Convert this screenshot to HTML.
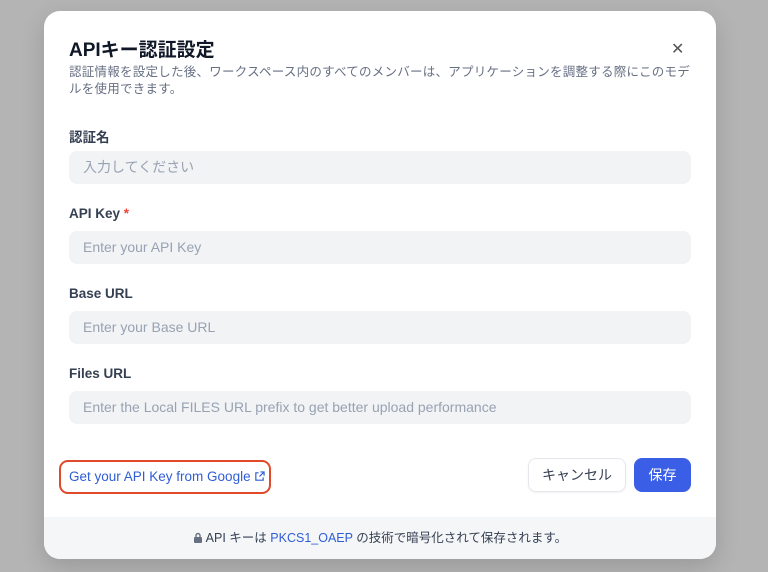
<!DOCTYPE html>
<html><head><meta charset="utf-8"><style>
*{box-sizing:border-box;margin:0;padding:0}
body{width:768px;height:572px;background:#b4b4b4;font-family:"Liberation Sans","Noto Sans CJK JP",sans-serif;position:relative;overflow:hidden}
.modal{position:absolute;left:44px;top:11px;width:672px;height:548px;background:#fff;border-radius:16px;overflow:hidden;box-shadow:0 8px 24px rgba(0,0,0,.15)}
.t{position:absolute;left:25px;top:24px;font-size:19px;font-weight:bold;color:#101828}
.x{position:absolute;left:627px;top:28px;font-size:16px;color:#555}
.d{position:absolute;left:25px;top:53px;width:625px;font-size:12.5px;line-height:17px;color:#676f83;letter-spacing:0.25px}
.l{position:absolute;left:25px;font-size:13.5px;font-weight:bold;color:#354052}
.l span{color:#f04438}
.i{position:absolute;left:25px;width:622px;height:33px;background:#f2f3f5;border-radius:8px;padding-left:14px;line-height:33px;font-size:14px;color:#98a2b3}
.link{position:absolute;left:15px;top:449px;width:212px;height:34px;border:2px solid #e04a2a;border-radius:9px;font-size:13.5px;color:#2f5dd6;line-height:30px;padding-left:8px;white-space:nowrap}
.c{position:absolute;left:484px;top:447px;width:98px;height:34px;border:1px solid #e4e7ec;border-radius:8px;font-size:14px;color:#354052;text-align:center;line-height:32px;box-shadow:0 1px 2px rgba(0,0,0,.05)}
.s{position:absolute;left:590px;top:447px;width:57px;height:34px;background:#3a5ee6;border-radius:8px;font-size:14px;color:#fff;text-align:center;line-height:34px}
.f{position:absolute;left:0;top:506px;width:672px;height:42px;background:#f5f6f8;text-align:center;font-size:12.5px;line-height:42px;color:#354052}
.f b{font-weight:normal;color:#2f5dd6}
</style></head><body>
<div class="modal">
<div class="t">APIキー認証設定</div>
<div class="x">✕</div>
<div class="d">認証情報を設定した後、ワークスペース内のすべてのメンバーは、アプリケーションを調整する際にこのモデルを使用できます。</div>
<div class="l" style="top:115px">認証名</div>
<div class="i" style="top:140px">入力してください</div>
<div class="l" style="top:195px">API Key <span>*</span></div>
<div class="i" style="top:220px">Enter your API Key</div>
<div class="l" style="top:275px">Base URL</div>
<div class="i" style="top:300px">Enter your Base URL</div>
<div class="l" style="top:355px">Files URL</div>
<div class="i" style="top:380px">Enter the Local FILES URL prefix to get better upload performance</div>
<div class="link">Get your API Key from Google <svg width="11" height="11" viewBox="0 0 12 12" style="vertical-align:-1px"><path d="M5 2H2v8h8V7M7 1h4v4M11 1L6 6" fill="none" stroke="#2f5dd6" stroke-width="1.3"/></svg></div>
<div class="c">キャンセル</div>
<div class="s">保存</div>
<div class="f"><svg width="10" height="11" viewBox="0 0 10 11" style="vertical-align:-1px"><rect x="1" y="5" width="8" height="6" rx="1" fill="#676f83"/><path d="M3 5V3.5a2 2 0 0 1 4 0V5" fill="none" stroke="#676f83" stroke-width="1.4"/></svg> API キーは <b>PKCS1_OAEP</b> の技術で暗号化されて保存されます。</div>
</div>
</body></html>
